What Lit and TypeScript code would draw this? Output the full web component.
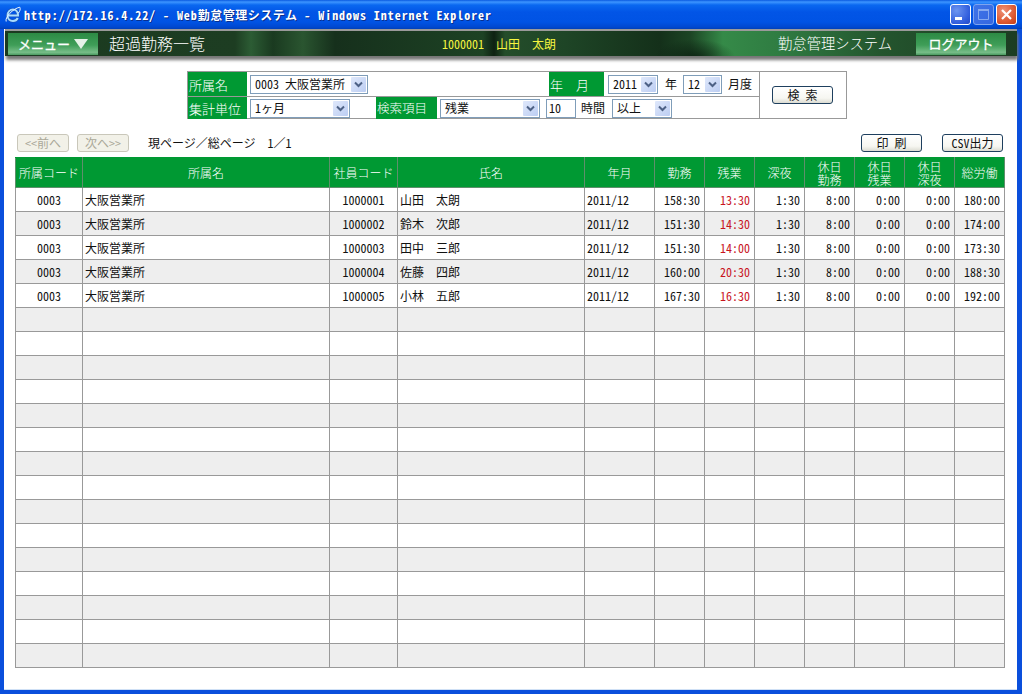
import { LitElement, html, css, svg } from "lit";
import { customElement } from "lit/decorators.js";

type Row = { code: string; dept: string; emp: string; name: string; ym: string; vals: string[] };
const people: [string, string, string, string, string][] = [
  ["1000001", "山田　太朗", "158:30", "13:30", "180:00"],
  ["1000002", "鈴木　次郎", "151:30", "14:30", "174:00"],
  ["1000003", "田中　三郎", "151:30", "14:00", "173:30"],
  ["1000004", "佐藤　四郎", "160:00", "20:30", "188:30"],
  ["1000005", "小林　五郎", "167:30", "16:30", "192:00"],
];
const rows: (Row | null)[] = Array.from({ length: 20 }, (_, i) => {
  const p = people[i];
  if (!p) return null;
  return {
    code: "0003",
    dept: "大阪営業所",
    emp: p[0],
    name: p[1],
    ym: "2011/12",
    vals: [p[2], p[3], "1:30", "8:00", "0:00", "0:00", p[4]],
  };
});
const widths = [67, 247, 68, 187, 70, 50, 50, 50, 50, 50, 50, 50];
const heads = ["所属コード", "所属名", "社員コード", "氏名", "年月", "勤務", "残業", "深夜", "休日<br>勤務", "休日<br>残業", "休日<br>深夜", "総労働"];

const chevron = svg`<svg width="9" height="7" viewBox="0 0 9 7"><path d="M1 1.5 L4.5 5 L8 1.5" fill="none" stroke="#4d6185" stroke-width="2"/></svg>`;

@customElement("app-root")
export class AppRoot extends LitElement {
  static styles = css`
    :host {
      display: block;
      width: 1022px;
      height: 694px;
      overflow: hidden;
      font: 400 12px/1 "Noto Sans CJK JP", "Liberation Sans", sans-serif;
      font-feature-settings: "hwid";
      color: #111;
    }
    .fw { font-feature-settings: normal; }
    .window {
      height: 694px;
      display: flex;
      flex-direction: column;
      background: #0a4fdc;
    }
    .titlebar {
      height: 29px;
      flex: none;
      display: flex;
      align-items: center;
      padding: 0 5px 0 5px;
      background: linear-gradient(180deg, #0a5ae0 0, #3d95ff 2px, #0a68f0 5px, #0255e6 12px, #0053e4 22px, #0048d0 27px, #0040b8 29px);
      color: #fff;
      font-weight: 700;
      text-shadow: 1px 1px 0 #0a2f8c;
    }
    .ie { flex: none; }
    .title { margin-left: 3px; flex: 1; white-space: nowrap; letter-spacing: 0.95px; padding-top: 1px; }
    .title b { font-weight: 700; letter-spacing: 0.5px; }
    .ctl {
      width: 21px;
      height: 21px;
      margin-left: 2px;
      border: 1px solid #fff;
      border-radius: 3px;
      box-sizing: border-box;
      background: radial-gradient(circle at 30% 30%, #6d95f0, #2f5cdc 70%, #2449c4);
      display: flex;
      flex: none;
    }
    .ctl svg { display: block; }
    .ctl.off { background: linear-gradient(135deg, #3f74e8, #3567e0); border-color: #7ea4ee; }
    .ctl.close { background: radial-gradient(circle at 35% 30%, #ee9278, #dd5a32 60%, #c23c14); }
    .frame {
      flex: 1;
      margin: 0 5px 4px 4px;
      background: #fff;
      display: flex;
      flex-direction: column;
      border-bottom: 1px solid #cfe0f5;
      min-height: 0;
    }
    .bar {
      height: 25px;
      flex: none;
      border-top: 2px solid #9a9a9a;
      margin: 0 0 0 1px;
      box-shadow: 1px 4px 3px #777;
      display: flex;
      align-items: center;
      padding: 0 11px 0 3px;
      color: #fff;
      background:
        radial-gradient(ellipse 40px 18px at 690px 26px, rgba(10,30,16,.8), rgba(10,30,16,0) 100%),
        linear-gradient(90deg, #1b3a20 0, #1d3d22 230px, #2c5c34 246px, #1a3a20 268px, #2a5530 298px, #16301c 330px, #1d4224 478px, #0e2212 489px, #244d2a 500px, #1e4526 560px, #14301a 655px, #1c4424 685px, #358a48 718px, #2f7c42 775px, #24552e 875px, #1c3d22 1010px);
    }
    .gbtn {
      width: 90px;
      height: 22px;
      flex: none;
      display: flex;
      align-items: center;
      justify-content: center;
      gap: 4px;
      font-size: 13px;
      color: #fff;
      -webkit-text-stroke: 0.3px #fff;
      background: linear-gradient(180deg, #2c8a44 0, #3f9e58 55%, #77bd88 88%, #4a9a60 100%);
    }
    .tri { width: 0; height: 0; border-left: 7px solid transparent; border-right: 7px solid transparent; border-top: 10px solid #e6f2e8; }
    .page-title { margin-left: 11px; font-size: 16px; font-weight: 300; width: 333px; color: #fff; padding-bottom: 1px; }
    .user { font-size: 12px; color: #f6f640; width: 325px; }
    .user span { display: inline-block; }
    .user .uid { margin-right: 12px; }
    .sys { margin-left: auto; margin-right: 24px; font-size: 14.3px; font-weight: 300; color: #fff; }
    .main { flex: 1; display: flex; flex-direction: column; padding: 15px 0 0 11px; min-height: 0; }
    .filter {
      align-self: flex-start;
      margin-left: 172px;
      width: 660px;
      height: 48px;
      box-sizing: border-box;
      border: 1px solid #999;
      display: flex;
      font-size: 12px;
    }
    .f-left { width: 571px; flex: none; border-right: 1px solid #999; display: flex; flex-direction: column; }
    .f-row { height: 24px; display: flex; align-items: center; flex: none; box-sizing: border-box; }
    .f-row + .f-row { border-top: 1px solid #999; height: 23px; }
    .lab {
      background: #009933;
      color: #fff;
      align-self: stretch;
      display: flex;
      align-items: center;
      padding-left: 1px;
      font-size: 13px;
      font-weight: 300;
      box-sizing: border-box;
      flex: none;
    }
    .lab.a { width: 59px; margin-right: 3px; }
    .lab.b { width: 61px; margin-left: 26px; margin-right: 3px; font-size: 12.5px; }
    .lab.c { width: 55px; margin-left: 181px; margin-right: 4px; padding-left: 1px; white-space: pre; font-feature-settings: normal; }
    .sel {
      height: 19px;
      box-sizing: border-box;
      border: 1px solid #7f9db9;
      background: #fff;
      display: flex;
      align-items: center;
      justify-content: space-between;
      padding: 0 1px 0 4px;
      flex: none;
      white-space: nowrap;
    }
    .arrow {
      width: 15px;
      height: 15px;
      background: linear-gradient(135deg, #dfe8fb, #bccdf2);
      display: flex;
      align-items: center;
      justify-content: center;
      border-radius: 1px;
      flex: none;
    }
    .inp { width: 30px; height: 19px; box-sizing: border-box; border: 1px solid #7f9db9; display: flex; align-items: center; padding-left: 2px; margin-left: 6px; flex: none; }
    .txt { flex: none; font-size: 12px; white-space: nowrap; }
    .f-right { flex: 1; display: flex; align-items: center; justify-content: center; padding: 0 1px 0 0; }
    .btn {
      height: 18px;
      width: 61px;
      box-sizing: border-box;
      border: 1px solid #1e3f5e;
      border-radius: 3px;
      background: linear-gradient(180deg, #fff 0, #f6f6f1 70%, #dcdcd2 100%);
      display: flex;
      align-items: center;
      justify-content: center;
      flex: none;
      font-size: 12px;
      white-space: pre;
    }
    .btn.dis { width: 52px; border-color: #c9c7ba; background: #f2f1e8; color: #aaa898; }
    .tools { height: 18px; display: flex; align-items: center; margin: 15px 0 5px 2px; flex: none; width: 986px; }
    .pager { margin-left: 19px; display: flex; }
    .nav2 { margin-left: 8px; }
    .right1 { margin-left: auto; }
    .right2 { margin-left: 20px; }
    table {
      border-collapse: collapse;
      table-layout: fixed;
      width: 990px;
      font-size: 12px;
    }
    th {
      height: 30px;
      padding: 0;
      background: #009933;
      color: #fff;
      font-weight: 300;
      border: 1px solid #5f8f6c;
      border-top-color: #009933;
      line-height: 13px;
      text-align: center;
      font-size: 12px;
      box-sizing: border-box;
    }
    td {
      height: 24px;
      padding: 0;
      border: 1px solid #999;
      box-sizing: border-box;
      white-space: nowrap;
      overflow: hidden;
    }
    tr.even td { background: #eee; }
    .c { text-align: center; }
    .l { padding-left: 2px; }
    .r { text-align: right; padding-right: 4px; }
    .red { color: #c8141e; }
  `;

  private sel(text: string, w: number, ml = 0) {
    return html`<div class="sel" style="width:${w}px;margin-left:${ml}px"><span>${text}</span><span class="arrow">${chevron}</span></div>`;
  }

  render() {
    return html`
      <div class="window">
        <div class="titlebar">
          <svg class="ie" width="16" height="17" viewBox="0 0 16 17">
            <path d="M3 9.5 H13 C13 5.5 10.5 3.5 8 3.5 C5 3.5 2.6 6 2.6 9.5 C2.6 13 5 15 8 15 C10 15 11.8 14 12.8 12" fill="none" stroke="#1a4fb4" stroke-width="3.2"/>
            <path d="M3 9.5 H13 C13 5.5 10.5 3.5 8 3.5 C5 3.5 2.6 6 2.6 9.5 C2.6 13 5 15 8 15 C10 15 11.8 14 12.8 12" fill="none" stroke="#a8dcff" stroke-width="2"/>
            <path d="M1.2 15.5 C-0.5 11.5 8 2.5 14.8 1.2 C15.8 3 14.8 5.5 13.4 7" fill="none" stroke="#e8f4ff" stroke-width="1"/>
          </svg>
          <div class="title">http://172.16.4.22/ - Web<b>勤怠管理システム</b> - Windows Internet Explorer</div>
          <div class="ctl"><svg width="19" height="19" viewBox="0 0 19 19"><rect x="4" y="12" width="7" height="3" fill="#fff"/></svg></div>
          <div class="ctl off"><svg width="19" height="19" viewBox="0 0 19 19"><path d="M4.5 5.5 H14.5 V14.5 H4.5 Z" fill="none" stroke="#86a9ef"/><rect x="4" y="4" width="11" height="2" fill="#86a9ef"/></svg></div>
          <div class="ctl close"><svg width="19" height="19" viewBox="0 0 19 19"><path d="M5 5 L14 14 M14 5 L5 14" stroke="#fff" stroke-width="2.2"/></svg></div>
        </div>
        <div class="frame">
          <div class="bar">
            <div class="gbtn">メニュー<span class="tri"></span></div>
            <div class="page-title">超過勤務一覧</div>
            <div class="user"><span class="uid">1000001</span><span class="fw">山田　太朗</span></div>
            <div class="sys">勤怠管理システム</div>
            <div class="gbtn">ログアウト</div>
          </div>
          <div class="main">
            <div class="filter">
              <div class="f-left">
                <div class="f-row">
                  <div class="lab a">所属名</div>
                  ${this.sel("0003 大阪営業所", 118)}
                  <div class="lab c">年　月</div>
                  ${this.sel("2011", 50)}
                  <span class="txt" style="margin-left:7px">年</span>
                  ${this.sel("12", 39, 6)}
                  <span class="txt" style="margin-left:6px">月度</span>
                </div>
                <div class="f-row">
                  <div class="lab a">集計単位</div>
                  ${this.sel("1ヶ月", 100)}
                  <div class="lab b">検索項目</div>
                  ${this.sel("残業", 100)}
                  <div class="inp">10</div>
                  <span class="txt" style="margin-left:5px">時間</span>
                  ${this.sel("以上", 60, 7)}
                </div>
              </div>
              <div class="f-right"><div class="btn">検 索</div></div>
            </div>
            <div class="tools">
              <div class="btn dis">&lt;&lt;前へ</div>
              <div class="btn dis nav2">次へ&gt;&gt;</div>
              <span class="pager"><span class="fw">現ページ／総ページ　</span><span>1</span><span class="fw">／</span><span>1</span></span>
              <div class="btn right1">印 刷</div>
              <div class="btn right2">CSV出力</div>
            </div>
            <table>
              <colgroup>${widths.map((w) => html`<col style="width:${w}px" />`)}</colgroup>
              <thead>
                <tr>${heads.map((h) => {
                  const parts = h.split("<br>");
                  return html`<th>${parts[0]}${parts[1] ? html`<br />${parts[1]}` : ""}</th>`;
                })}</tr>
              </thead>
              <tbody>
                ${rows.map(
                  (r, i) => html`<tr class=${i % 2 ? "even" : ""}>
                    <td class="c">${r?.code ?? ""}</td>
                    <td class="l">${r?.dept ?? ""}</td>
                    <td class="c">${r?.emp ?? ""}</td>
                    <td class="l fw">${r?.name ?? ""}</td>
                    <td class="l">${r?.ym ?? ""}</td>
                    ${Array.from({ length: 7 }, (_, k) => html`<td class="r ${k === 1 ? "red" : ""}">${r?.vals[k] ?? ""}</td>`)}
                  </tr>`
                )}
              </tbody>
            </table>
          </div>
        </div>
      </div>
    `;
  }
}
